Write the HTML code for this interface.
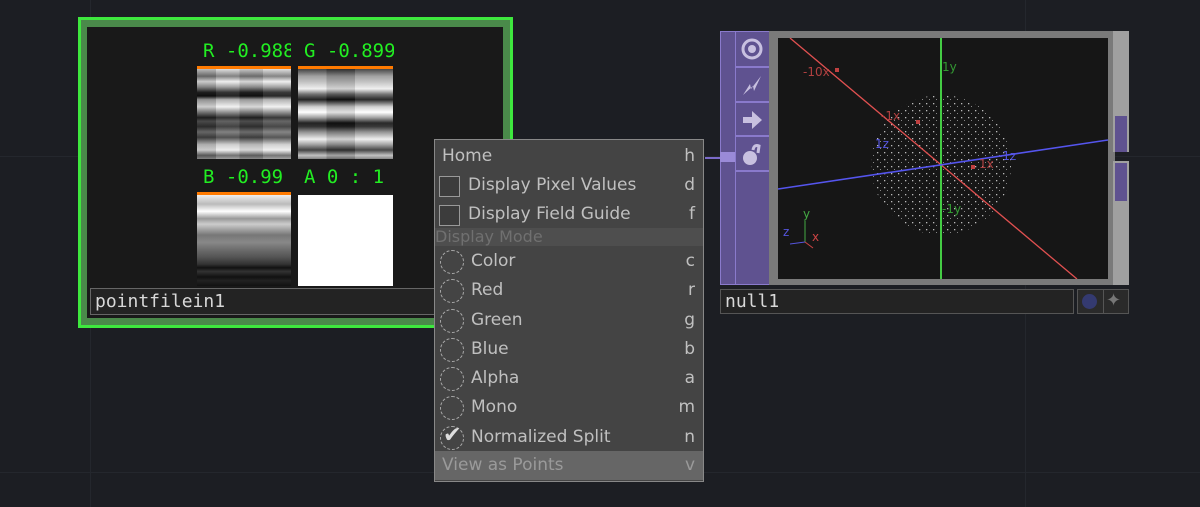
<!DOCTYPE html>
<html><head><meta charset="utf-8"><style>
*{margin:0;padding:0;box-sizing:border-box}
body{width:1200px;height:507px;background:#1c1e23;position:relative;overflow:hidden;font-family:"DejaVu Sans","Liberation Sans",sans-serif}
.a{position:absolute}
.mono{font-family:"DejaVu Sans Mono","Liberation Mono",monospace}
.tex{background:
linear-gradient(90deg,rgba(0,0,0,.15) 0 20%,rgba(255,255,255,.08) 20% 45%,rgba(0,0,0,.1) 45% 70%,rgba(255,255,255,.1) 70% 100%),
linear-gradient(#ddd 0,#777 8%,#eee 14%,#999 20%,#222 26%,#111 30%,#aaa 34%,#f0f0f0 42%,#888 48%,#222 54%,#555 58%,#333 64%,#777 70%,#444 76%,#ccc 84%,#eee 90%,#666 96%,#999 100%)}
.tex2{background:
linear-gradient(90deg,rgba(255,255,255,.08) 0 30%,rgba(0,0,0,.12) 30% 60%,rgba(255,255,255,.1) 60% 100%),
linear-gradient(#333 0,#999 8%,#bbb 14%,#eee 22%,#666 28%,#111 34%,#ccc 42%,#fff 48%,#999 54%,#111 60%,#222 64%,#888 70%,#eee 78%,#999 84%,#333 90%,#bbb 96%,#777 100%)}
.tex3{background:
linear-gradient(#eee 0,#bbb 10%,#fff 18%,#999 26%,#ccc 32%,#777 44%,#888 52%,#666 62%,#555 68%,#333 76%,#111 80%,#333 84%,#111 90%,#222 94%,#111 100%)}
.row{position:absolute;left:0;width:100%;height:29px;font-size:17px;color:#c0c0c0;line-height:29px}
.row .k{position:absolute;right:8px;top:0}
.cb{position:absolute;left:4px;top:5px;width:21px;height:21px;border:1px solid #999;background:#3c3c3c}
.rd{position:absolute;left:5px;top:3px;width:24px;height:24px;border:1px dashed #aaa;border-radius:50%}
.lab{left:36px;position:absolute}
.g{font-size:19px;color:#22ee22;white-space:pre;overflow:hidden}
</style></head><body>
<div class="a" style="left:90px;top:0;width:1px;height:507px;background:#24272d"></div>
<div class="a" style="left:1025px;top:0;width:1px;height:507px;background:#24272d"></div>
<div class="a" style="left:0;top:156px;width:1200px;height:1px;background:#24272d"></div>
<div class="a" style="left:0;top:472px;width:1200px;height:1px;background:#24272d"></div>

<!-- left node -->
<div class="a" style="left:78px;top:17px;width:435px;height:311px;border:3px solid #3ee83e;background:#4a8a4a"></div>
<div class="a" style="left:87px;top:27px;width:416px;height:291px;background:#191919"></div>
<div class="a mono g" style="left:203px;top:40px;width:88px">R -0.988</div>
<div class="a mono g" style="left:304px;top:40px;width:90px">G -0.899</div>
<div class="a mono g" style="left:203px;top:166px;width:90px">B -0.99</div>
<div class="a mono g" style="left:304px;top:166px;width:90px">A 0 : 1</div>
<div class="a" style="left:197px;top:66px;width:94px;height:3px;background:#ff7a00"></div>
<div class="a tex" style="left:197px;top:69px;width:94px;height:90px"></div>
<div class="a" style="left:298px;top:66px;width:95px;height:3px;background:#ff7a00"></div>
<div class="a tex2" style="left:298px;top:69px;width:95px;height:90px"></div>
<div class="a" style="left:197px;top:192px;width:94px;height:3px;background:#ff7a00"></div>
<div class="a tex3" style="left:197px;top:195px;width:94px;height:91px"></div>
<div class="a" style="left:298px;top:195px;width:95px;height:91px;background:#fff"></div>
<div class="a mono" style="left:90px;top:288px;width:350px;height:27px;background:#232323;border:1px solid #666;color:#d8d8d8;font-size:18px;line-height:25px;padding-left:4px">pointfilein1</div>

<!-- right node -->
<div class="a" style="left:705px;top:157px;width:16px;height:2px;background:#7a6ac8"></div>
<div class="a" style="left:720px;top:31px;width:50px;height:254px;background:#5f5290;border:1px solid #8a7acc"></div>
<div class="a" style="left:735px;top:31px;width:1px;height:254px;background:#8a7acc"></div>
<div class="a" style="left:720px;top:152px;width:15px;height:10px;background:#9a8ad8"></div>
<div class="a" style="left:736px;top:66px;width:33px;height:2px;background:#8a7acc"></div>
<div class="a" style="left:736px;top:101px;width:33px;height:2px;background:#8a7acc"></div>
<div class="a" style="left:736px;top:135px;width:33px;height:2px;background:#8a7acc"></div>
<div class="a" style="left:736px;top:170px;width:33px;height:2px;background:#8a7acc"></div>
<svg class="a" style="left:736px;top:31px" width="33" height="140">
<circle cx="16" cy="18" r="9" fill="none" stroke="#c8c0e0" stroke-width="3"/><circle cx="16" cy="18" r="4" fill="#c8c0e0"/>
<path d="M7 64 L14 53 L15 58 L25 45 L18 60 L17 55 Z" fill="#c8c0e0"/>
<path d="M7 86 L16 86 L16 80 L26 89 L16 98 L16 92 L7 92 Z" fill="#c8c0e0"/>
<circle cx="14" cy="127" r="7" fill="#c8c0e0"/><path d="M17 119 Q18 113 23 115 L22 122" fill="none" stroke="#c8c0e0" stroke-width="3"/>
</svg>
<div class="a" style="left:769px;top:31px;width:346px;height:254px;background:#7a7a7a"></div>
<div class="a" style="left:1113px;top:31px;width:16px;height:121px;background:#a0a0a0"></div>
<div class="a" style="left:1115px;top:116px;width:12px;height:36px;background:#5f5290"></div>
<div class="a" style="left:1113px;top:161px;width:16px;height:124px;background:#a0a0a0"></div>
<div class="a" style="left:1115px;top:163px;width:12px;height:38px;background:#5f5290"></div>
<svg class="a" style="left:778px;top:38px" width="330" height="241">
<defs><pattern id="p" width="7" height="7" patternUnits="userSpaceOnUse"><rect x="1" y="2" width="1.3" height="1.3" fill="#bbb"/><rect x="4" y="5" width="1" height="1" fill="#888"/></pattern></defs>
<rect width="330" height="241" fill="#161616"/>
<ellipse cx="163" cy="127" rx="70" ry="70" fill="url(#p)"/>
<line x1="12" y1="0" x2="299" y2="241" stroke="#e05050" stroke-width="1.3"/>
<line x1="163" y1="0" x2="163" y2="241" stroke="#44cc44" stroke-width="2"/>
<line x1="0" y1="151" x2="330" y2="102" stroke="#5555ee" stroke-width="1.6"/>
<g font-size="12" font-family="DejaVu Sans">
<text x="25" y="38" fill="#b04040">-10x</text><rect x="57" y="30" width="4" height="4" fill="#c04040"/>
<text x="103" y="82" fill="#b04040">-1x</text><rect x="138" y="82" width="4" height="4" fill="#c04040"/>
<text x="201" y="130" fill="#b04040">1x</text><rect x="193" y="127" width="4" height="4" fill="#c04040"/>
<text x="164" y="33" fill="#339933">1y</text>
<text x="164" y="175" fill="#339933">-1y</text>
<text x="220" y="122" fill="#5555dd">-1z</text>
<text x="97" y="110" fill="#5555dd">1z</text>
<text x="25" y="180" fill="#44aa44">y</text><text x="5" y="198" fill="#5555dd">z</text><text x="34" y="203" fill="#cc4444">x</text>
</g>
<line x1="27" y1="183" x2="27" y2="204" stroke="#44aa44"/><line x1="27" y1="204" x2="12" y2="206" stroke="#5555dd"/><line x1="27" y1="204" x2="35" y2="210" stroke="#cc4444"/>
</svg>
<div class="a mono" style="left:720px;top:289px;width:354px;height:25px;background:#232323;border:1px solid #555;color:#d8d8d8;font-size:18px;line-height:23px;padding-left:4px">null1</div>
<div class="a" style="left:1077px;top:289px;width:52px;height:25px;background:#2a2a2a;border:1px solid #555"></div>
<div class="a" style="left:1103px;top:290px;width:1px;height:23px;background:#555"></div>
<div class="a" style="left:1082px;top:294px;width:15px;height:15px;border-radius:50%;background:#343a70"></div>
<div class="a" style="left:1106px;top:290px;color:#777;font-size:18px">✦</div>

<!-- menu -->
<div class="a" style="left:434px;top:139px;width:270px;height:343px;background:#444;border:1px solid #888">
 <div class="row" style="top:2px"><span style="position:absolute;left:7px">Home</span><span class="k">h</span></div>
 <div class="row" style="top:31px"><div class="cb"></div><span style="position:absolute;left:33px">Display Pixel Values</span><span class="k">d</span></div>
 <div class="row" style="top:60px"><div class="cb"></div><span style="position:absolute;left:33px">Display Field Guide</span><span class="k">f</span></div>
 <div class="a" style="left:0;top:88px;width:268px;height:18px;background:#4e4e4e;color:#707070;font-size:16px;line-height:18px">Display Mode</div>
 <div class="row" style="top:107px"><div class="rd"></div><span class="lab">Color</span><span class="k">c</span></div>
 <div class="row" style="top:136px"><div class="rd"></div><span class="lab">Red</span><span class="k">r</span></div>
 <div class="row" style="top:166px"><div class="rd"></div><span class="lab">Green</span><span class="k">g</span></div>
 <div class="row" style="top:195px"><div class="rd"></div><span class="lab">Blue</span><span class="k">b</span></div>
 <div class="row" style="top:224px"><div class="rd"></div><span class="lab">Alpha</span><span class="k">a</span></div>
 <div class="row" style="top:253px"><div class="rd"></div><span class="lab">Mono</span><span class="k">m</span></div>
 <div class="row" style="top:283px"><div class="rd"></div><span style="position:absolute;left:8px;top:-2px;font-size:22px;color:#ddd">✔</span><span class="lab">Normalized Split</span><span class="k">n</span></div>
 <div class="row" style="top:311px;left:0;width:268px;height:29px;background:#666;color:#9a9a9a"><span style="position:absolute;left:7px">View as Points</span><span class="k">v</span></div>
</div>
</body></html>
